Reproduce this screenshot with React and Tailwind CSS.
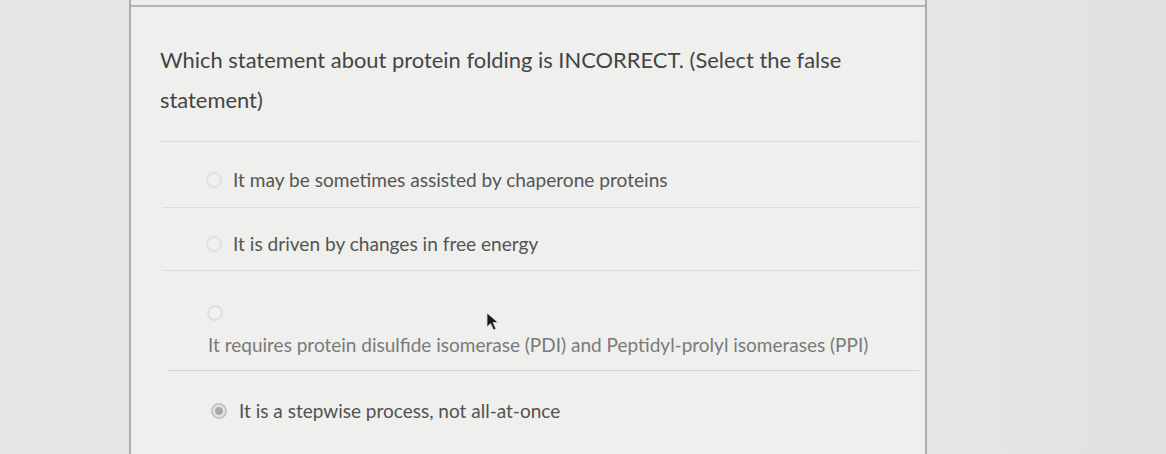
import React from "react";

function Radio({ checked, className = "" }) {
  return (
    <span
      className={
        "inline-flex shrink-0 items-center justify-center w-[16px] h-[16px] rounded-full border-2 " +
        (checked ? "border-[#c4c4c4] bg-[#e8e8e8] " : "border-[#e0e0df] bg-[#f0f0ef] ") +
        className
      }
    >
      {checked && <span className="block w-[8px] h-[8px] rounded-full bg-[#a9a9a9]" />}
    </span>
  );
}

export default function App() {
  const font = { fontFamily: "Lato, 'Open Sans', sans-serif" };
  return (
    <div className="relative flex w-full h-[454px] overflow-hidden bg-[#e4e5e4]" style={font}>
      <div className="w-[129px] shrink-0" />
      <div className="w-[798px] shrink-0 flex flex-col border-x-2 border-[#ababab] bg-[#efefee]">
        <div className="h-[5px] bg-[#ececeb]" />
        <div className="border-t-2 border-[#b4b4b4] flex-1 flex flex-col">
          <div className="pl-[29px] pr-[40px] pt-[33px] text-[21.9px] leading-[40px] text-[#444444]">
            Which statement about protein folding is INCORRECT. (Select the false statement)
          </div>
          <div className="ml-[29px] mr-[6px] mt-[21px] h-px bg-[#dcdcdb]" />

          <div className="flex items-center pl-[75px] pt-[28px] pb-[17px] h-[65px]">
            <Radio />
            <span className="ml-[11px] text-[19.1px] leading-[20px] text-[#555555]">
              It may be sometimes assisted by chaperone proteins
            </span>
          </div>
          <div className="ml-[31px] mr-[6px] h-px bg-[#dcdcdb]" />

          <div className="flex items-center pl-[75px] pt-[26px] pb-[16px] h-[62px]">
            <Radio />
            <span className="ml-[11px] text-[19.1px] leading-[20px] text-[#555555]">
              It is driven by changes in free energy
            </span>
          </div>
          <div className="ml-[31px] mr-[6px] h-px bg-[#dcdcdb]" />

          <div className="flex flex-col pl-[77px] pt-[34px] h-[99px]">
            <Radio className="ml-[-1px]" />
            <span className="mt-[14px] text-[19px] leading-[20px] text-[#7a7a7a]">
              It requires protein disulfide isomerase (PDI) and Peptidyl-prolyl isomerases (PPI)
            </span>
          </div>
          <div className="ml-[37px] mr-[6px] h-px bg-[#d4d4d3]" />

          <div className="flex items-center pl-[80px] pt-[30px]">
            <Radio checked />
            <span className="ml-[12px] text-[19px] leading-[20px] text-[#525252]">
              It is a stepwise process, not all-at-once
            </span>
          </div>
        </div>
      </div>
      <div className="flex-1 bg-gradient-to-r from-[#e6e7e6] to-[#dfe0df]" />

      <svg className="absolute left-[486px] top-[312px]" width="16" height="20" viewBox="0 0 16 20">
        <path d="M1 1 L1 15 L4.5 11.5 L7.5 18 L10 17 L7 10.5 L12 10.5 Z" fill="#1a1a1a" stroke="#e0e0e0" strokeWidth="0.8" />
      </svg>
    </div>
  );
}
